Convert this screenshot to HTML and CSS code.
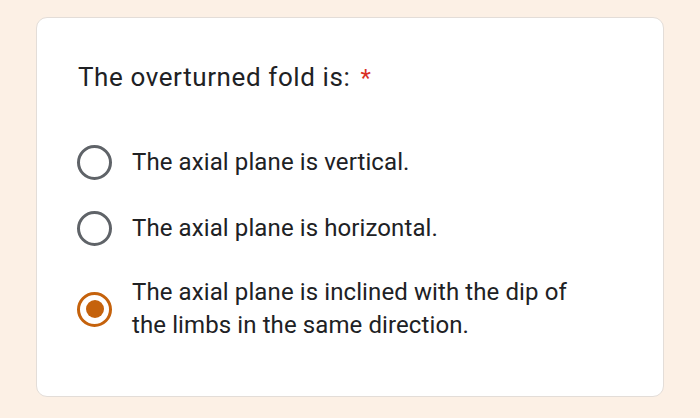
FILE: index.html
```html
<!DOCTYPE html>
<html lang="en">
<head>
<meta charset="utf-8">
<title>Question</title>
<link rel="stylesheet" href="styles.css">
</head>
<body>
<div class="card">
  <div class="question">The overturned fold is:<span class="req">*</span></div>
  <div class="options">
    <div class="option">
      <span class="radio"></span>
      <span class="label">The axial plane is vertical.</span>
    </div>
    <div class="option option-2">
      <span class="radio"></span>
      <span class="label">The axial plane is horizontal.</span>
    </div>
    <div class="option option-3">
      <span class="radio checked"><span class="dot"></span></span>
      <span class="label">The axial plane is inclined with the dip of the limbs in the same direction.</span>
    </div>
  </div>
</div>
</body>
</html>
```
FILE: styles.css
```css
html, body {
  margin: 0;
  padding: 0;
}
body {
  background: #fcf0e5;
  font-family: Roboto, "Noto Sans", sans-serif;
  color: #202124;
  width: 700px;
  height: 418px;
  overflow: hidden;
}
.card {
  box-sizing: border-box;
  margin: 17px 0 0 36px;
  width: 628px;
  height: 380px;
  background: #ffffff;
  border: 1.5px solid #e3ddd8;
  border-radius: 11px;
  padding: 43px 40px 0 41px;
}
.question {
  font-size: 26px;
  line-height: 32px;
  letter-spacing: 0.6px;
  color: #202124;
}
.req {
  color: #d93025;
  margin-left: 10px;
  font-size: 24px;
}
.options {
  margin-top: 51px;
  display: flex;
  flex-direction: column;
}
.option {
  display: flex;
  align-items: center;
  gap: 20px;
}
.option-2 {
  margin-top: 31px;
}
.option-3 {
  margin-top: 30px;
}
.radio {
  flex: none;
  box-sizing: border-box;
  width: 35px;
  height: 35px;
  margin-left: -1px;
  border: 3.5px solid #5f6368;
  border-radius: 50%;
  display: flex;
  align-items: center;
  justify-content: center;
}
.radio.checked {
  border-color: #c5620c;
}
.dot {
  width: 18px;
  height: 18px;
  border-radius: 50%;
  background: #c5620c;
}
.label {
  font-size: 24px;
  line-height: 33px;
  letter-spacing: 0.1px;
  color: #202124;
  max-width: 470px;
}
```
